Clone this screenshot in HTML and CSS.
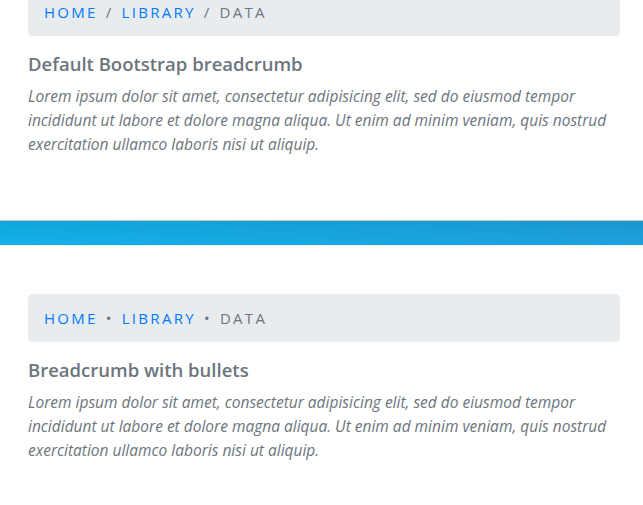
FILE: index.html
```html
<!DOCTYPE html>
<html lang="en">
<head>
    <meta charset="UTF-8">
    <meta name="viewport" content="width=device-width, initial-scale=1.0">
    <title>Breadcrumbs</title>
    <link rel="stylesheet" href="styles.css">
</head>
<body>
    <section class="demo demo-first">
        <nav>
            <ol class="breadcrumb">
                <li class="breadcrumb-item"><a href="#">Home</a></li>
                <li class="breadcrumb-item"><a href="#">Library</a></li>
                <li class="breadcrumb-item active">Data</li>
            </ol>
        </nav>
        <h5>Default Bootstrap breadcrumb</h5>
        <p>Lorem ipsum dolor sit amet, consectetur adipisicing elit, sed do eiusmod tempor incididunt ut labore et dolore magna aliqua. Ut enim ad minim veniam, quis nostrud exercitation ullamco laboris nisi ut aliquip.</p>
    </section>

    <div class="divider"></div>

    <section class="demo">
        <nav>
            <ol class="breadcrumb breadcrumb-bullets">
                <li class="breadcrumb-item"><a href="#">Home</a></li>
                <li class="breadcrumb-item"><a href="#">Library</a></li>
                <li class="breadcrumb-item active">Data</li>
            </ol>
        </nav>
        <h5>Breadcrumb with bullets</h5>
        <p>Lorem ipsum dolor sit amet, consectetur adipisicing elit, sed do eiusmod tempor incididunt ut labore et dolore magna aliqua. Ut enim ad minim veniam, quis nostrud exercitation ullamco laboris nisi ut aliquip.</p>
    </section>
</body>
</html>
```

FILE: styles.css
```css
body {
    font-family: "Open Sans", "Noto Sans", sans-serif;
    margin: 0;
    color: #6c757d;
    background: #fff;
}
.demo {
    padding: 48px 23px 64px 28px;
}
.demo-first {
    padding-top: 0;
    margin-top: -12px;
}
.breadcrumb {
    display: flex;
    flex-wrap: wrap;
    list-style: none;
    margin: 0 0 16px;
    padding: 12px 16px;
    background-color: #e9ecef;
    border-radius: 4px;
    font-size: 15px;
    line-height: 24px;
    text-transform: uppercase;
    letter-spacing: 2.3px;
}
.breadcrumb-item a {
    color: #007bff;
    text-decoration: none;
}
.breadcrumb-item.active {
    color: #6c757d;
}
.breadcrumb-item + .breadcrumb-item {
    padding-left: 8px;
}
.breadcrumb-item + .breadcrumb-item::before {
    content: "/";
    padding-right: 8px;
    color: #6c757d;
}
.breadcrumb-bullets .breadcrumb-item + .breadcrumb-item::before {
    content: "\2022";
}
h5 {
    margin: 0 0 8px;
    font-size: 18.5px;
    font-weight: 600;
    line-height: 24px;
    color: #6c757d;
}
p {
    margin: 0;
    font-size: 15.5px;
    font-style: italic;
    line-height: 24px;
    color: #6c757d;
}
.divider {
    height: 24px;
    border-top: 1px solid #c8c8c8;
    border-bottom: 1px solid #f0f0f0;
    background: linear-gradient(to bottom, rgba(0, 0, 0, 0.07), rgba(0, 0, 0, 0)),
        linear-gradient(to right, #12b2ea, #1ea1de);
}
```
